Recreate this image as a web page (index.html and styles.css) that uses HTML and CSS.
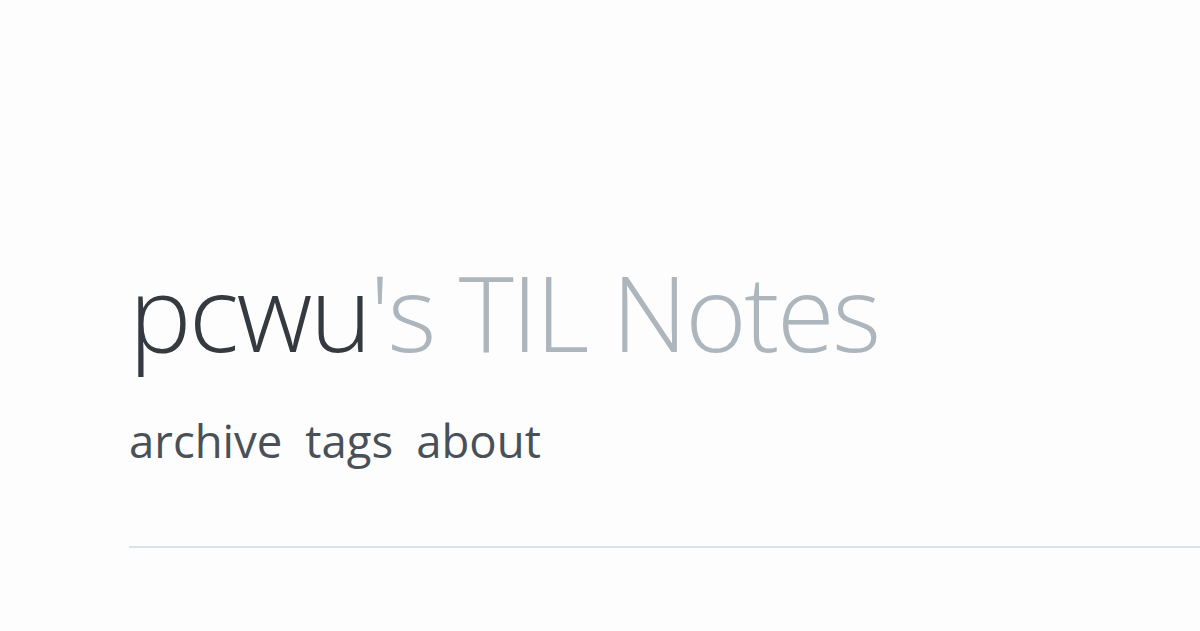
FILE: index.html
```html
<!DOCTYPE html>
<html lang="en">
<head>
    <meta charset="UTF-8">
    <meta name="viewport" content="width=device-width, initial-scale=1.0">
    <title>pcwu's TIL Notes</title>
    <link rel="stylesheet" href="styles.css">
</head>
<body>
    <header class="site-header">
        <h1 class="site-title"><span class="owner">pcwu</span>'s TIL Notes</h1>
        <nav class="site-nav">
            <a href="#">archive</a>
            <a href="#">tags</a>
            <a href="#">about</a>
        </nav>
    </header>
</body>
</html>
```

FILE: styles.css
```css
body {
    margin: 0;
    background: #fdfdfd;
    font-family: 'Open Sans', sans-serif;
}

.site-header {
    margin-left: 129px;
    padding-top: 249px;
    padding-bottom: 75px;
    border-bottom: 2px solid #dfe2e5;
}

.site-title {
    margin: 0;
    font-size: 105px;
    font-weight: 300;
    line-height: 1.2;
    color: #adb5bd;
    letter-spacing: -2.4px;
}

.owner {
    color: #343a40;
}

.site-nav {
    display: flex;
    gap: 23px;
    margin-top: 34px;
}

.site-nav a {
    font-size: 45.5px;
    color: #495057;
    text-decoration: none;
}
```
